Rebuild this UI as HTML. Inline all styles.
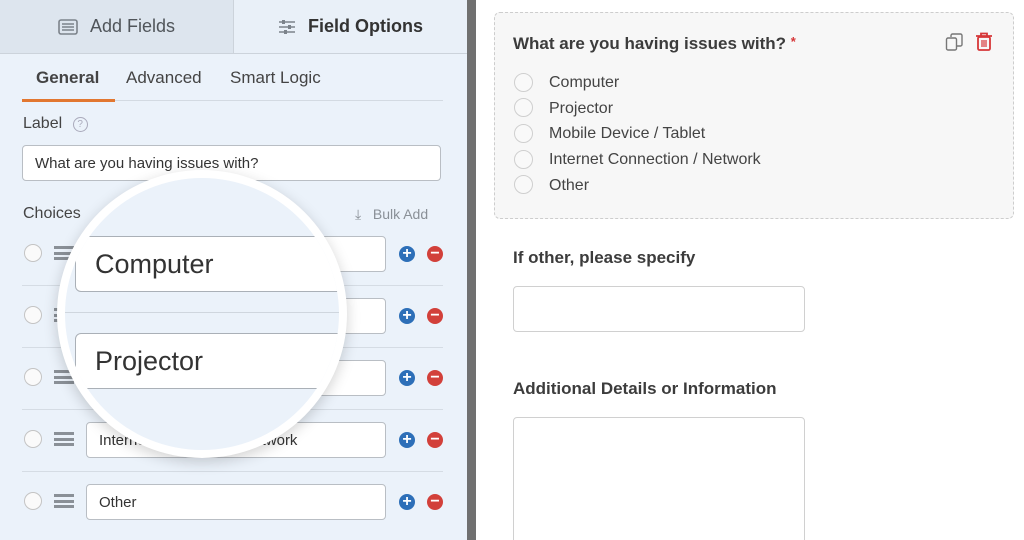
<!DOCTYPE html>
<html><head><meta charset="utf-8"><style>
*{box-sizing:border-box;margin:0;padding:0}
html,body{width:1024px;height:540px;overflow:hidden}
body{font-family:"Liberation Sans",sans-serif;background:#fff;position:relative;color:#444}
.abs{position:absolute}
#left{left:0;top:0;width:467px;height:540px;background:#ebf2fa}
#div{left:467px;top:0;width:9px;height:540px;background:#707070}
.tab{top:0;height:54px;font-size:18px;display:flex;align-items:center;justify-content:center;color:#50555a;border-bottom:1px solid #ccd3db}
.inp{background:#fff;border:1px solid #b9bec4;border-radius:4px;font-size:15px;color:#333;display:flex;align-items:center;padding-left:12px}
.radio{width:18px;height:18px;border-radius:50%;border:1px solid #c4c4c4;background:#fafafa}
.ham{width:20px;height:14px;border-top:3px solid #8a9097;border-bottom:3px solid #8a9097}
.ham:after{content:"";display:block;margin-top:2.5px;height:3px;background:#8a9097}
.pl,.mi{width:16px;height:16px;border-radius:50%;color:#fff;font-size:16px;font-weight:bold;line-height:16px;text-align:center}
.pl{background:#2d6fb8}.mi{background:#d2403a}
.sep{left:22px;width:421px;height:1px;background:#d5dce4}
.rr{width:19px;height:19px;border-radius:50%;border:1px solid #cfcfcf;background:#f9f9f9}
.rl{font-size:16px;color:#444}
</style></head><body>
<div id="left" class="abs"></div>
<div class="abs tab" style="left:0;width:233px;background:#dde5ee">
<svg width="20" height="16" style="margin-right:12px"><rect x="1" y="1" width="18" height="14" rx="2" fill="none" stroke="#7c838b" stroke-width="1.6"/><path d="M4 5h12M4 8h12M4 11h12" stroke="#7c838b" stroke-width="1.4"/></svg>Add Fields</div>
<div class="abs tab" style="left:233px;width:234px;background:#e9f0f8;border-left:1px solid #ccd3db;font-weight:bold;color:#333">
<svg width="18" height="16" style="margin-right:12px"><path d="M1 3h16M1 8h16M1 13h16" stroke="#7c838b" stroke-width="1.4"/><rect x="4" y="1" width="3" height="4" fill="#7c838b"/><rect x="10" y="6" width="3" height="4" fill="#7c838b"/><rect x="6" y="11" width="3" height="4" fill="#7c838b"/></svg>Field Options</div>
<div class="abs" style="left:36px;top:68px;font-size:17px;font-weight:bold;color:#444">General</div>
<div class="abs" style="left:126px;top:68px;font-size:17px;color:#444">Advanced</div>
<div class="abs" style="left:230px;top:68px;font-size:17px;color:#444">Smart Logic</div>
<div class="abs" style="left:22px;top:100px;width:421px;height:1px;background:#d3dae2"></div>
<div class="abs" style="left:22px;top:99px;width:93px;height:3px;background:#e27730"></div>
<div class="abs" style="left:23px;top:115px;font-size:16px;color:#444">Label <span style="display:inline-block;width:15px;height:15px;border:1px solid #aab;border-radius:50%;font-size:10px;text-align:center;line-height:13px;color:#aab;margin-left:6px;vertical-align:1px">?</span></div>
<div class="abs inp" style="left:22px;top:145px;width:419px;height:36px">What are you having issues with?</div>
<div class="abs" style="left:23px;top:205px;font-size:16px;color:#444">Choices</div>
<div class="abs" style="left:355px;top:206px;font-size:14px;color:#8a9097">⤓&nbsp;&nbsp; Bulk Add</div>
<!-- rows -->
<div class="abs radio" style="left:24px;top:244px"></div><div class="abs ham" style="left:54px;top:246px"></div><div class="abs inp" style="left:86px;top:236px;width:300px;height:36px"></div><div class="abs pl" style="left:399px;top:246px">+</div><div class="abs mi" style="left:427px;top:246px">−</div>
<div class="abs sep" style="top:285px"></div>
<div class="abs radio" style="left:24px;top:306px"></div><div class="abs ham" style="left:54px;top:308px"></div><div class="abs inp" style="left:86px;top:298px;width:300px;height:36px"></div><div class="abs pl" style="left:399px;top:308px">+</div><div class="abs mi" style="left:427px;top:308px">−</div>
<div class="abs sep" style="top:347px"></div>
<div class="abs radio" style="left:24px;top:368px"></div><div class="abs ham" style="left:54px;top:370px"></div><div class="abs inp" style="left:86px;top:360px;width:300px;height:36px"></div><div class="abs pl" style="left:399px;top:370px">+</div><div class="abs mi" style="left:427px;top:370px">−</div>
<div class="abs sep" style="top:409px"></div>
<div class="abs radio" style="left:24px;top:430px"></div><div class="abs ham" style="left:54px;top:432px"></div><div class="abs inp" style="left:86px;top:422px;width:300px;height:36px">Internet Connection / Network</div><div class="abs pl" style="left:399px;top:432px">+</div><div class="abs mi" style="left:427px;top:432px">−</div>
<div class="abs sep" style="top:471px"></div>
<div class="abs radio" style="left:24px;top:492px"></div><div class="abs ham" style="left:54px;top:494px"></div><div class="abs inp" style="left:86px;top:484px;width:300px;height:36px">Other</div><div class="abs pl" style="left:399px;top:494px">+</div><div class="abs mi" style="left:427px;top:494px">−</div>
<!-- magnifier -->
<div class="abs" style="left:57px;top:170px;width:290px;height:288px;border-radius:50%;border:8px solid #fff;overflow:hidden;background:#ebf2fa;box-shadow:0 4px 14px rgba(0,0,0,.18)">
 <div class="abs inp" style="left:10px;top:58px;width:320px;height:56px;font-size:27px;padding-left:19px;border-color:#aab0b7;border-radius:6px">Computer</div>
 <div class="abs" style="left:0;top:134px;width:300px;height:1px;background:#cfd6de"></div>
 <div class="abs inp" style="left:10px;top:155px;width:320px;height:56px;font-size:27px;padding-left:19px;border-color:#aab0b7;border-radius:6px">Projector</div>
</div>
<div id="div" class="abs"></div>
<!-- right -->
<div class="abs" style="left:494px;top:12px;width:520px;height:207px;background:#f7f7f7;border:1px dashed #cdcdcd;border-radius:6px"></div>
<div class="abs" style="left:513px;top:34px;font-size:17px;font-weight:bold;color:#3c3c3c">What are you having issues with? <span style="color:#d63638;font-size:13px;vertical-align:top">*</span></div>
<svg class="abs" style="left:945px;top:33px" width="20" height="20"><rect x="1.5" y="5" width="10" height="12" rx="1.5" fill="none" stroke="#777" stroke-width="1.4"/><path d="M6 4V2.5A1.5 1.5 0 0 1 7.5 1h8A1.5 1.5 0 0 1 17 2.5v9a1.5 1.5 0 0 1-1.5 1.5H12" fill="none" stroke="#777" stroke-width="1.4"/></svg>
<svg class="abs" style="left:975px;top:32px" width="18" height="20"><path d="M1 4h16M6 4V1.5h6V4" fill="none" stroke="#d63638" stroke-width="1.8"/><rect x="3" y="5" width="12" height="13" rx="1.5" fill="none" stroke="#d63638" stroke-width="1.8"/><path d="M7 8v7M9 8v7M11 8v7" stroke="#d63638" stroke-width="1.2"/></svg>
<div class="abs rr" style="left:514px;top:73px"></div><div class="abs rl" style="left:549px;top:74px">Computer</div>
<div class="abs rr" style="left:514px;top:98px"></div><div class="abs rl" style="left:549px;top:100px">Projector</div>
<div class="abs rr" style="left:514px;top:124px"></div><div class="abs rl" style="left:549px;top:125px">Mobile Device / Tablet</div>
<div class="abs rr" style="left:514px;top:150px"></div><div class="abs rl" style="left:549px;top:151px">Internet Connection / Network</div>
<div class="abs rr" style="left:514px;top:175px"></div><div class="abs rl" style="left:549px;top:177px">Other</div>
<div class="abs" style="left:513px;top:248px;font-size:17px;font-weight:bold;color:#3c3c3c">If other, please specify</div>
<div class="abs" style="left:513px;top:286px;width:292px;height:46px;border:1px solid #d0d0d0;border-radius:4px"></div>
<div class="abs" style="left:513px;top:379px;font-size:17px;font-weight:bold;color:#3c3c3c">Additional Details or Information</div>
<div class="abs" style="left:513px;top:417px;width:292px;height:130px;border:1px solid #d0d0d0;border-radius:4px"></div>
</body></html>
